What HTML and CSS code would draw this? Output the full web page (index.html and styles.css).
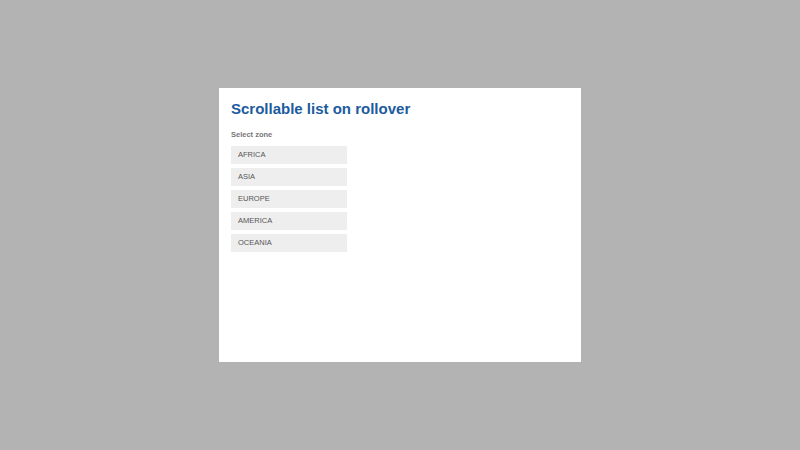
FILE: index.html
```html
<!DOCTYPE html>
<html lang="en">
<head>
  <meta charset="UTF-8">
  <title>Scrollable list on rollover</title>
  <link rel="stylesheet" href="styles.css">
</head>
<body>

  <div class="panel">
    <h1 class="title">Scrollable list on rollover</h1>
    <div class="label">Select zone</div>
    <ul class="zones">
      <li class="zone">AFRICA</li>
      <li class="zone">ASIA</li>
      <li class="zone">EUROPE</li>
      <li class="zone">AMERICA</li>
      <li class="zone">OCEANIA</li>
    </ul>
  </div>

</body>
</html>
```

FILE: styles.css
```css
* {
  box-sizing: border-box;
  margin: 0;
  padding: 0;
  font-family: "Liberation Sans", Arial, sans-serif;
}

body {
  display: flex;
  align-items: center;
  justify-content: center;
  height: 100vh;
  background-color: #b3b3b3;
}

/* Panel */
.panel {
  width: 362px;
  height: 274px;
  background: #fff;
  padding: 10px 12px;
}

.title {
  font-size: 15px;
  font-weight: bold;
  color: #1b5b9e;
  line-height: 22px;
  margin-bottom: 9px;
}

.label {
  font-size: 7.5px;
  font-weight: bold;
  color: #777;
  line-height: 12px;
  margin-bottom: 5px;
}

/* Zone list */
.zones {
  list-style: none;
  display: flex;
  flex-direction: column;
  gap: 4px;
  width: 116px;
}

.zone {
  background: #eeeeee;
  color: #555;
  font-size: 7.5px;
  line-height: 18px;
  padding-left: 7px;
}
```
